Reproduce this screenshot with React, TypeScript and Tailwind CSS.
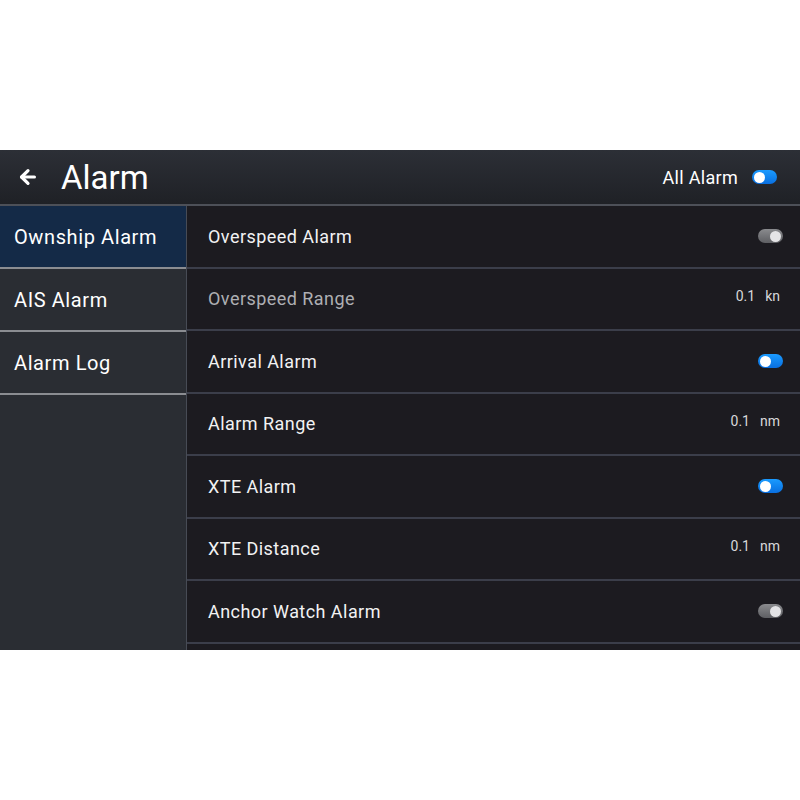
import { ArrowLeft } from 'lucide-react';

type Row = { label: string; dim?: boolean; toggle?: 'on' | 'off'; value?: string; unit?: string };

const rows: Row[] = [
  { label: 'Overspeed Alarm', toggle: 'off' },
  { label: 'Overspeed Range', dim: true, value: '0.1', unit: 'kn' },
  { label: 'Arrival Alarm', toggle: 'on' },
  { label: 'Alarm Range', value: '0.1', unit: 'nm' },
  { label: 'XTE Alarm', toggle: 'on' },
  { label: 'XTE Distance', value: '0.1', unit: 'nm' },
  { label: 'Anchor Watch Alarm', toggle: 'off' },
  { label: '' },
];

function Toggle({ on }: { on: boolean }) {
  if (on) {
    return (
      <div className="w-[25px] h-[14px] rounded-full bg-gradient-to-b from-[#1b9bff] to-[#0a6fe0] flex items-center pl-[2px]">
        <div className="w-[11px] h-[11px] rounded-full bg-white" />
      </div>
    );
  }
  return (
    <div className="w-[25px] h-[14px] rounded-full bg-gradient-to-b from-[#8a8b8e] to-[#5e5f63] flex items-center justify-end pr-[2px]">
      <div className="w-[11px] h-[11px] rounded-full bg-[#e4e4e6]" />
    </div>
  );
}

export default function App() {
  const sideItems = ['Ownship Alarm', 'AIS Alarm', 'Alarm Log'];

  return (
    <div className="w-[800px] h-[800px] bg-white flex flex-col" style={{ fontFamily: 'Roboto, "Liberation Sans", sans-serif' }}>
      <div className="h-[150px] shrink-0" />
      <div className="h-[500px] shrink-0 flex flex-col overflow-hidden bg-[#1c1b20]">
        <header className="h-[56px] shrink-0 flex items-center bg-gradient-to-b from-[#2c2f36] to-[#1f2126] border-b-2 border-[#4d5058]">
          <ArrowLeft size={22} strokeWidth={3.5} className="text-white ml-[17px]" />
          <span className="text-white text-[33px] ml-[22px] leading-none">Alarm</span>
          <span className="ml-auto text-white text-[18px] tracking-[0.3px]">All Alarm</span>
          <div className="ml-[14px] mr-[23px]">
            <Toggle on />
          </div>
        </header>
        <div className="flex flex-1 min-h-0">
          <aside className="w-[187px] shrink-0 bg-[#2a2d33] border-r border-[#474b55] flex flex-col">
            {sideItems.map((s, i) => (
              <div
                key={s}
                className={
                  i === 0
                    ? 'h-[63px] shrink-0 flex items-center pl-[14px] bg-[#142a47] border-b-2 border-[#8b8d92] text-white text-[20px] tracking-[0.6px]'
                    : 'h-[63px] shrink-0 flex items-center pl-[14px] border-b-2 border-[#8b8d92] text-white text-[20px] tracking-[0.6px]'
                }
              >
                {s}
              </div>
            ))}
          </aside>
          <main className="flex-1 flex flex-col">
            {rows.map((r, i) => (
              <div key={i} className="h-[62.5px] shrink-0 flex items-center border-b-2 border-[#3b3e4a] pl-[21px] pr-[17px]">
                {r.label && (
                  <span className={r.dim ? 'text-[#aeafb3] text-[18px] tracking-[0.45px]' : 'text-[#f2f2f3] text-[18px] tracking-[0.45px]'}>{r.label}</span>
                )}
                <div className="ml-auto flex items-center">
                  {r.toggle && <Toggle on={r.toggle === 'on'} />}
                  {r.value && (
                    <div className="flex items-center gap-[10px] text-[14px] text-[#d8d8da] pr-[3px] -mt-[4px]">
                      <span>{r.value}</span>
                      <span>{r.unit}</span>
                    </div>
                  )}
                </div>
              </div>
            ))}
          </main>
        </div>
      </div>
    </div>
  );
}
